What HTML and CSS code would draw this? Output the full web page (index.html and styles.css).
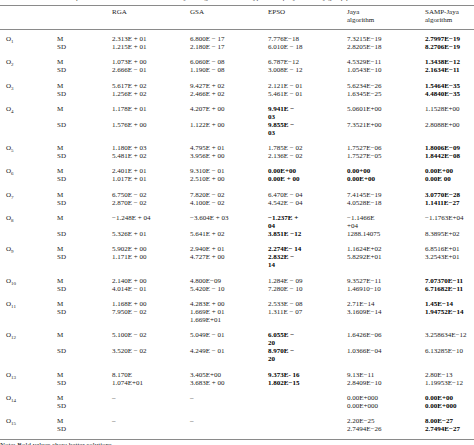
FILE: index.html
```html
<!DOCTYPE html>
<html>
<head>
<meta charset="utf-8">
<link rel="stylesheet" href="styles.css">
</head>
<body>
<div class="caption"><span>Table 5 Comparison of statistical results obtained by the algorithms for the typical uniquely chosen by group problems</span></div>
<table class="res">
<colgroup>
<col class="c-lbl"><col class="c-ms"><col class="c-v"><col class="c-v"><col class="c-e"><col class="c-v"><col class="c-s">
</colgroup>
<thead>
<tr><th></th><th></th><th>RGA</th><th>GSA</th><th>EPSO</th><th>Jaya<br>algorithm</th><th>SAMP-Jaya<br>algorithm</th></tr>
</thead>
<tbody>
<tr class="g first"><td class="lbl">O<sub>1</sub></td><td>M</td><td>2.313E + 01</td><td>6.800E − 17</td><td>7.776E−18</td><td>7.3215E−19</td><td class="b">2.7997E−19</td></tr>
<tr><td></td><td>SD</td><td>1.215E + 01</td><td>2.180E − 17</td><td>6.010E − 18</td><td>2.8205E−18</td><td class="b">8.2706E−19</td></tr>

<tr class="g"><td class="lbl">O<sub>2</sub></td><td>M</td><td>1.073E + 00</td><td>6.060E − 08</td><td>6.787E−12</td><td>4.5329E−11</td><td class="b">1.3438E−12</td></tr>
<tr><td></td><td>SD</td><td>2.666E − 01</td><td>1.190E − 08</td><td>3.008E − 12</td><td>1.0543E−10</td><td class="b">2.1634E−11</td></tr>

<tr class="g"><td class="lbl">O<sub>3</sub></td><td>M</td><td>5.617E + 02</td><td>9.427E + 02</td><td>2.121E − 01</td><td>5.6234E−26</td><td class="b">1.5464E−35</td></tr>
<tr><td></td><td>SD</td><td>1.256E + 02</td><td>2.466E + 02</td><td>5.461E − 01</td><td>1.6345E−25</td><td class="b">4.4840E−35</td></tr>

<tr class="g"><td class="lbl">O<sub>4</sub></td><td>M</td><td>1.178E + 01</td><td>4.207E + 00</td><td class="b">9.941E −<br>03</td><td>5.0601E+00</td><td>1.1528E+00</td></tr>
<tr><td></td><td>SD</td><td>1.576E + 00</td><td>1.122E + 00</td><td class="b">9.855E −<br>03</td><td>7.3521E+00</td><td>2.8088E+00</td></tr>

<tr class="g"><td class="lbl">O<sub>5</sub></td><td>M</td><td>1.180E + 03</td><td>4.795E + 01</td><td>1.785E − 02</td><td>1.7527E−06</td><td class="b">1.8006E−09</td></tr>
<tr><td></td><td>SD</td><td>5.481E + 02</td><td>3.956E + 00</td><td>2.136E − 02</td><td>1.7527E−05</td><td class="b">1.8442E−08</td></tr>

<tr class="g"><td class="lbl">O<sub>6</sub></td><td>M</td><td>2.401E + 01</td><td>9.310E − 01</td><td class="b">0.00E+00</td><td class="b">0.00+00</td><td class="b">0.00E+00</td></tr>
<tr><td></td><td>SD</td><td>1.017E + 01</td><td>2.510E + 00</td><td class="b">0.00E + 00</td><td class="b">0.00E+00</td><td class="b">0.00E 00</td></tr>

<tr class="g"><td class="lbl">O<sub>7</sub></td><td>M</td><td>6.750E − 02</td><td>7.820E − 02</td><td>6.470E − 04</td><td>7.4145E−19</td><td class="b">3.0770E−28</td></tr>
<tr><td></td><td>SD</td><td>2.870E − 02</td><td>4.100E − 02</td><td>4.542E − 04</td><td>4.0528E−18</td><td class="b">1.1411E−27</td></tr>

<tr class="g"><td class="lbl">O<sub>8</sub></td><td>M</td><td>−1.248E + 04</td><td>−3.604E + 03</td><td class="b">−1.237E +<br>04</td><td>−1.1466E<br>+04</td><td>−1.1763E+04</td></tr>
<tr><td></td><td>SD</td><td>5.326E + 01</td><td>5.641E + 02</td><td class="b">3.851E −12</td><td>1288.14075</td><td>8.3895E+02</td></tr>

<tr class="g"><td class="lbl">O<sub>9</sub></td><td>M</td><td>5.902E + 00</td><td>2.940E + 01</td><td class="b">2.274E− 14</td><td>1.1624E+02</td><td>6.8516E+01</td></tr>
<tr><td></td><td>SD</td><td>1.171E + 00</td><td>4.727E + 00</td><td class="b">2.832E −<br>14</td><td>5.8292E+01</td><td>3.2543E+01</td></tr>

<tr class="g"><td class="lbl">O<sub>10</sub></td><td>M</td><td>2.140E + 00</td><td>4.800E−09</td><td>1.284E − 09</td><td>9.3527E−11</td><td class="b">7.07370E−11</td></tr>
<tr><td></td><td>SD</td><td>4.014E − 01</td><td>5.420E − 10</td><td>7.280E − 10</td><td>1.46910−10</td><td class="b">6.71682E−11</td></tr>

<tr class="g"><td class="lbl">O<sub>11</sub></td><td>M</td><td>1.168E + 00</td><td>4.283E + 00</td><td>2.533E − 08</td><td>2.71E−14</td><td class="b">1.45E−14</td></tr>
<tr><td></td><td>SD</td><td>7.950E − 02</td><td>1.669E + 01<br>1.669E+01</td><td>1.311E − 07</td><td>3.1609E−14</td><td class="b">1.94752E−14</td></tr>

<tr class="g"><td class="lbl">O<sub>12</sub></td><td>M</td><td>5.100E − 02</td><td>5.049E − 01</td><td class="b">6.055E −<br>20</td><td>1.6426E−06</td><td>3.258634E−12</td></tr>
<tr><td></td><td>SD</td><td>3.520E − 02</td><td>4.249E − 01</td><td class="b">8.970E −<br>20</td><td>1.0366E−04</td><td>6.13285E−10</td></tr>

<tr class="g"><td class="lbl">O<sub>13</sub></td><td>M</td><td>8.170E</td><td>3.405E+00</td><td class="b">9.373E- 16</td><td>9.13E−11</td><td>2.80E−13</td></tr>
<tr><td></td><td>SD</td><td>1.074E+01</td><td>3.683E + 00</td><td class="b">1.802E−15</td><td>2.8409E−10</td><td>1.19953E−12</td></tr>

<tr class="g"><td class="lbl">O<sub>14</sub></td><td>M</td><td>–</td><td>–</td><td></td><td>0.00E+000</td><td class="b">0.00E+00</td></tr>
<tr><td></td><td>SD</td><td></td><td></td><td></td><td>0.00E+000</td><td class="b">0.00E+000</td></tr>

<tr class="g"><td class="lbl">O<sub>15</sub></td><td>M</td><td>–</td><td>–</td><td></td><td>2.20E−25</td><td class="b">8.00E−27</td></tr>
<tr class="last"><td></td><td>SD</td><td></td><td></td><td></td><td>2.7494E−26</td><td class="b">2.7494E−27</td></tr>
</tbody>
</table>
<div class="note">Note: Bold values show better solutions</div>
</body>
</html>
```
FILE: styles.css
```css
html, body {
  margin: 0;
  padding: 0;
  background: #fff;
}
body {
  width: 474px;
  height: 445px;
  overflow: hidden;
  font-family: "Liberation Serif", "Times New Roman", serif;
  font-size: 7px;
  line-height: 8px;
  color: #222;
}
.caption {
  height: 4px;
  overflow: hidden;
  padding-left: 40px;
  color: #444;
}
.caption span {
  display: block;
  margin-top: -6px;
  white-space: nowrap;
}
.res {
  width: 474px;
  table-layout: fixed;
  border-collapse: collapse;
  margin-top: 1px;
}
.c-lbl { width: 57px; }
.c-ms { width: 55px; }
.c-v { width: 78px; }
.c-e { width: 79px; }
.c-s { width: 49px; }
.res th {
  font-weight: normal;
  text-align: left;
  vertical-align: top;
  padding: 2px 0 5px 0;
  border-top: 1.5px solid #8a8a8a;
  border-bottom: 1.5px solid #8a8a8a;
}
.res td {
  padding: 0;
  vertical-align: top;
  white-space: nowrap;
  text-align: left;
}
.res td.lbl {
  padding-left: 6px;
}
.res tr.g td {
  padding-top: 7.3px;
}
.res tr.first td {
  padding-top: 5px;
}
.res tr.last td {
  padding-bottom: 6px;
  border-bottom: 1.5px solid #8a8a8a;
}
.res td.b {
  font-weight: bold;
  color: #000;
}
sub {
  font-size: 5px;
  line-height: 0;
  vertical-align: -1.5px;
}
.note {
  padding-top: 1px;
  white-space: nowrap;
}
```
